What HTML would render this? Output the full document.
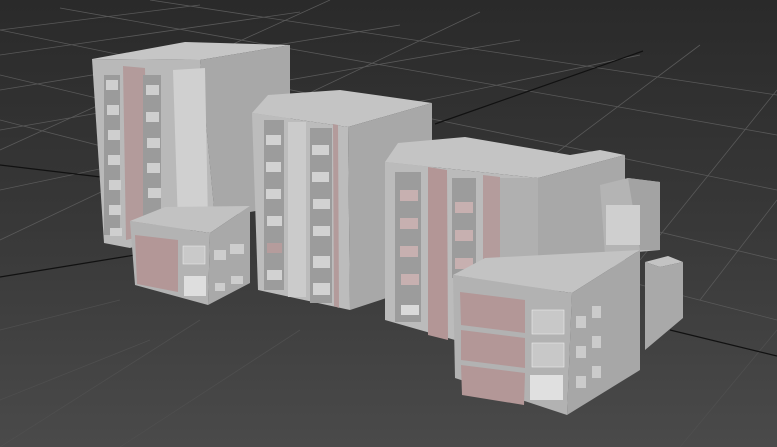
<!DOCTYPE html>
<html><head><style>
html,body{margin:0;padding:0;width:777px;height:447px;overflow:hidden;background:#3a3a3a}
svg{display:block}
</style></head><body>
<svg width="777" height="447" viewBox="0 0 777 447" xmlns="http://www.w3.org/2000/svg">
<defs>
<linearGradient id="bg" x1="0" y1="0" x2="0" y2="1">
<stop offset="0" stop-color="#2a2a2a"/><stop offset="0.5" stop-color="#383838"/><stop offset="1" stop-color="#4a4a4a"/>
</linearGradient>
</defs>
<rect width="777" height="447" fill="url(#bg)"/>
<g stroke="#595959" stroke-width="0.8" fill="none">
<path d="M0 30 L200 5 M0 55 L300 12 M0 90 L400 25 M0 130 L520 40 M0 190 L640 55"/>
<path d="M150 0 L777 95 M60 8 L777 135 M0 30 L777 190 M0 75 L777 260 M0 120 L777 320"/>
<path d="M330 0 L0 150 M480 12 L0 240 M700 45 L520 180 M777 90 L640 260 M777 200 L700 300"/>
</g>
<g stroke="#4f4f4f" stroke-width="0.8" fill="none">
<path d="M0 330 L120 300 M0 400 L150 340 M200 320 L0 447 M300 330 L120 447 M777 330 L680 447"/>
</g>
<g stroke="#111" stroke-width="1.2" fill="none">
<path d="M0 165 L210 190 M435 124 L643 51 M0 277 L215 242 M670 330 L777 356"/>
</g>

<!-- Building A -->
<polygon points="92,59 185,42 290,45 200,60" fill="#c6c6c6"/>
<polygon points="200,60 290,45 290,205 215,218" fill="#a8a8a8"/>
<polygon points="92,59 200,60 215,218 205,225 130,248 104,243" fill="#b9b9b9"/>
<polygon points="173,70 205,68 208,222 178,225" fill="#d0d0d0"/>
<polygon points="123,66 145,68 147,235 126,240" fill="#b39b9b"/>
<g fill="#9b9b9b">
<rect x="104" y="75" width="16" height="160"/><rect x="143" y="75" width="18" height="150"/>
</g>
<g fill="#cfcfcf">
<rect x="106" y="80" width="12" height="10"/><rect x="107" y="105" width="12" height="10"/><rect x="108" y="130" width="12" height="10"/><rect x="108" y="155" width="12" height="10"/><rect x="109" y="180" width="12" height="10"/><rect x="109" y="205" width="12" height="10"/><rect x="110" y="228" width="12" height="8"/>
<rect x="146" y="85" width="13" height="10"/><rect x="146" y="112" width="13" height="10"/><rect x="147" y="138" width="13" height="10"/><rect x="147" y="163" width="13" height="10"/><rect x="148" y="188" width="13" height="10"/>
</g>

<!-- Block A2 -->
<polygon points="130,221 165,207 250,206 210,233" fill="#c2c2c2"/>
<polygon points="210,233 250,206 250,283 208,305" fill="#a9a9a9"/>
<polygon points="130,221 210,233 208,305 135,285" fill="#b3b3b3"/>
<polygon points="135,235 178,240 178,292 137,284" fill="#b39797"/>
<rect x="183" y="246" width="22" height="18" fill="#c9c9c9" stroke="#eee" stroke-width="0.5"/>
<rect x="184" y="276" width="22" height="20" fill="#dedede"/>
<g fill="#cdcdcd"><rect x="214" y="250" width="12" height="10"/><rect x="230" y="244" width="14" height="10"/><rect x="215" y="283" width="10" height="8"/><rect x="231" y="276" width="12" height="8"/></g>

<!-- Building B -->
<polygon points="252,113 268,95 340,90 432,103 348,127" fill="#c4c4c4"/>
<polygon points="348,127 432,103 432,283 350,310" fill="#a8a8a8"/>
<polygon points="252,113 348,127 350,310 258,290" fill="#bcbcbc"/>
<polygon points="333,124 338,125 339,308 334,306" fill="#b39b9b"/>
<g fill="#9c9c9c"><rect x="264" y="120" width="20" height="170"/><rect x="310" y="128" width="22" height="175"/></g>
<rect x="288" y="122" width="18" height="175" fill="#cbcbcb"/>
<g fill="#d2d2d2">
<rect x="266" y="135" width="15" height="10"/><rect x="266" y="162" width="15" height="10"/><rect x="266" y="189" width="15" height="10"/><rect x="267" y="216" width="15" height="10"/><rect x="267" y="270" width="15" height="10"/>
<rect x="312" y="145" width="17" height="10"/><rect x="312" y="172" width="17" height="10"/><rect x="313" y="199" width="17" height="10"/><rect x="313" y="226" width="17" height="10"/><rect x="313" y="256" width="17" height="12"/><rect x="313" y="283" width="17" height="12"/>
</g>
<g fill="#b59c9c"><rect x="267" y="243" width="15" height="10"/></g>

<!-- Far right box -->
<polygon points="645,262 668,256 683,262 660,267" fill="#c3c3c3"/>
<polygon points="645,262 660,267 683,262 683,318 645,350" fill="#a9a9a9"/>

<!-- Building C -->
<polygon points="385,162 398,143 465,137 570,155 600,150 625,155 538,178" fill="#c4c4c4"/>
<polygon points="538,178 625,155 625,262 538,300" fill="#a8a8a8"/>
<polygon points="600,185 628,178 660,182 660,250 605,255" fill="#b4b4b4"/>
<polygon points="628,178 660,182 660,250 640,250" fill="#a3a3a3"/>
<rect x="606" y="205" width="34" height="40" fill="#cfcfcf"/>
<polygon points="385,162 538,178 538,300 455,340 385,320" fill="#bbbbbb"/>
<polygon points="428,167 447,170 448,340 428,335" fill="#b39696"/>
<polygon points="483,175 500,177 500,260 483,265" fill="#b49c9c"/>
<polygon points="500,178 538,178 538,290 500,260" fill="#b0b0b0"/>
<g fill="#9c9c9c"><rect x="395" y="172" width="26" height="150"/><rect x="452" y="178" width="24" height="100"/></g>
<g fill="#c7b0b0">
<rect x="400" y="190" width="18" height="11"/><rect x="400" y="218" width="18" height="11"/><rect x="400" y="246" width="18" height="11"/><rect x="401" y="274" width="18" height="11"/>
<rect x="455" y="202" width="18" height="11"/><rect x="455" y="230" width="18" height="11"/><rect x="455" y="258" width="18" height="11"/>
</g>
<rect x="401" y="305" width="18" height="10" fill="#dadada"/>

<!-- Block D -->
<polygon points="453,275 485,258 640,250 572,293" fill="#c3c3c3"/>
<polygon points="572,293 640,250 640,370 567,415" fill="#a7a7a7"/>
<polygon points="453,275 572,293 567,415 455,378" fill="#b2b2b2"/>
<g fill="#b39797">
<polygon points="460,292 525,300 525,333 461,325"/>
<polygon points="461,330 525,338 525,368 461,360"/>
<polygon points="461,365 525,373 524,405 462,395"/>
</g>
<g fill="#c8c8c8" stroke="#ececec" stroke-width="0.6">
<rect x="532" y="310" width="32" height="24"/><rect x="532" y="343" width="32" height="24"/>
</g>
<rect x="530" y="375" width="33" height="25" fill="#e0e0e0"/>
<g fill="#cbcbcb">
<rect x="576" y="316" width="10" height="12"/><rect x="592" y="306" width="9" height="12"/>
<rect x="576" y="346" width="10" height="12"/><rect x="592" y="336" width="9" height="12"/>
<rect x="576" y="376" width="10" height="12"/><rect x="592" y="366" width="9" height="12"/>
</g>
</svg>
</body></html>
